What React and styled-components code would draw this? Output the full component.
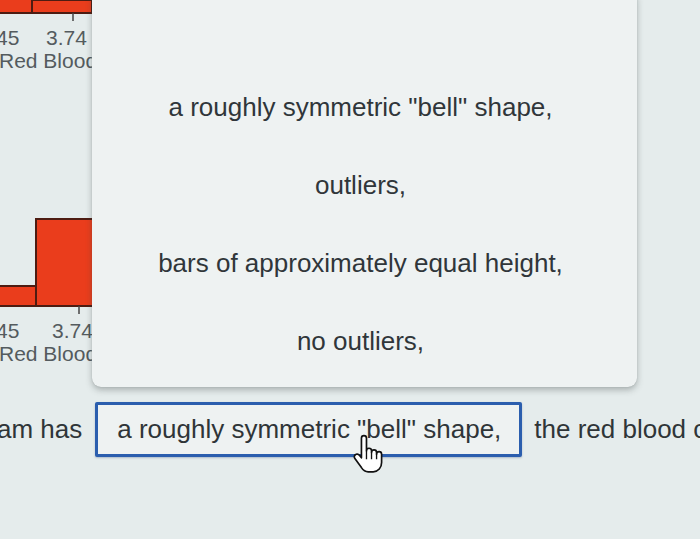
import React from "react";
import styled, { createGlobalStyle } from "styled-components";

const Global = createGlobalStyle`
  html, body { margin: 0; padding: 0; }
  body {
    width: 700px;
    height: 539px;
    overflow: hidden;
    background: #e5ecec;
    font-family: "Liberation Sans", Arial, sans-serif;
    color: #30363a;
  }
`;

const Page = styled.div`
  position: relative;
  width: 700px;
  height: 539px;
  overflow: hidden;
`;

const LeftColumn = styled.div`
  display: flex;
  flex-direction: column;
  width: 140px;
`;

const ChartBlock = styled.div`
  display: flex;
  flex-direction: column;
  margin-top: ${(p) => p.$top}px;
`;

const AxisTitle = styled.div`
  font-size: 21px;
  color: #545b5e;
  line-height: 24px;
  white-space: nowrap;
  margin-left: -1px;
`;

const Sentence = styled.div`
  display: flex;
  align-items: center;
  margin-top: ${(p) => p.$top}px;
  font-size: 26px;
  white-space: nowrap;
`;

const Word = styled.span`
  flex-shrink: 0;
  margin-left: ${(p) => p.$ml || 0}px;
  color: #2f3538;
`;

const SelectBox = styled.div`
  flex-shrink: 0;
  box-sizing: border-box;
  width: 427px;
  height: 55px;
  margin: 0 12px 0 13px;
  border: 3px solid #2b5eae;
  border-radius: 2px;
  background: #eef2f2;
  display: flex;
  align-items: center;
  padding-left: 19px;
  color: #2f3538;
  box-shadow: 0 1px 2px rgba(40, 70, 120, 0.3);
`;

const Menu = styled.div`
  position: absolute;
  left: 92px;
  top: -10px;
  width: 545px;
  box-sizing: border-box;
  padding: 78px 0 7px;
  background: #eef2f2;
  border-radius: 9px;
  box-shadow: 0 3px 6px rgba(60, 70, 70, 0.35), 0 0 1px rgba(60, 70, 70, 0.3);
  display: flex;
  flex-direction: column;
`;

const Option = styled.div`
  height: 78px;
  display: flex;
  align-items: center;
  justify-content: center;
  font-size: 26px;
  color: #30363a;
  padding-right: 8px;
`;

const Cursor = styled.svg`
  position: absolute;
  left: 352px;
  top: 434px;
  width: 34px;
  height: 42px;
`;

function Histogram({ barArea, leftTop, labelX }) {
  const h = barArea + 36;
  const bottom = barArea;
  return (
    <svg width="120" height={h} style={{ display: "block", overflow: "visible" }}>
      <rect x="-4" y={leftTop} width={labelX.split} height={bottom - leftTop} fill="#ea3d1c" stroke="#4d1c12" strokeWidth="2" />
      <rect x={labelX.split - 4} y="0" width={labelX.right - labelX.split + 4} height={bottom} fill="#ea3d1c" stroke="#4d1c12" strokeWidth="2" />
      <line x1={labelX.tick} y1={bottom} x2={labelX.tick} y2={bottom + 8} stroke="#444" strokeWidth="1.5" />
      <text x="-4" y={bottom + 32} fontSize="21" fill="#545b5e" fontFamily="Liberation Sans, Arial, sans-serif">45</text>
      <text x={labelX.num} y={bottom + 32} fontSize="21" fill="#545b5e" fontFamily="Liberation Sans, Arial, sans-serif">3.74</text>
    </svg>
  );
}

const options = [
  'a roughly symmetric "bell" shape,',
  "outliers,",
  "bars of approximately equal height,",
  "no outliers,",
];

export default function App() {
  return (
    <Page>
      <Global />
      <LeftColumn>
        <ChartBlock $top={0}>
          <Histogram barArea={13} leftTop={-20} labelX={{ split: 36, right: 92, tick: 73, num: 46 }} />
          <AxisTitle>Red Blood</AxisTitle>
        </ChartBlock>
        <ChartBlock $top={146}>
          <Histogram barArea={87} leftTop={67} labelX={{ split: 40, right: 94, tick: 79, num: 52 }} />
          <AxisTitle>Red Blood</AxisTitle>
        </ChartBlock>
      </LeftColumn>
      <Sentence $top={36}>
        <Word $ml={-3}>am has</Word>
        <SelectBox>a roughly symmetric "bell" shape,</SelectBox>
        <Word>the red blood cell</Word>
      </Sentence>
      <Menu>
        {options.map((o) => (
          <Option key={o}>{o}</Option>
        ))}
      </Menu>
      <Cursor viewBox="0 0 20 25">
        <path
          d="M5.5 2.5 a1.5 1.5 0 0 1 3 0 V10 a1.5 1.5 0 0 1 3 0 V11 a1.5 1.5 0 0 1 3 0 V12 a1.5 1.5 0 0 1 3 0 V17 c0 3 -2 5.5 -5 5.5 H9.5 c-2 0 -3 -1 -4 -2.5 L1.6 14.6 c-.7 -1 -.3 -2.2 .7 -2.5 c.8 -.3 1.6 0 2.1 .7 L5.5 14.2 Z"
          fill="#fff"
          stroke="#111"
          strokeWidth="1"
          strokeLinejoin="round"
        />
        <path d="M8.5 10 V15 M11.5 11 V15 M14.5 12 V15" stroke="#111" strokeWidth="0.8" fill="none" />
      </Cursor>
    </Page>
  );
}
